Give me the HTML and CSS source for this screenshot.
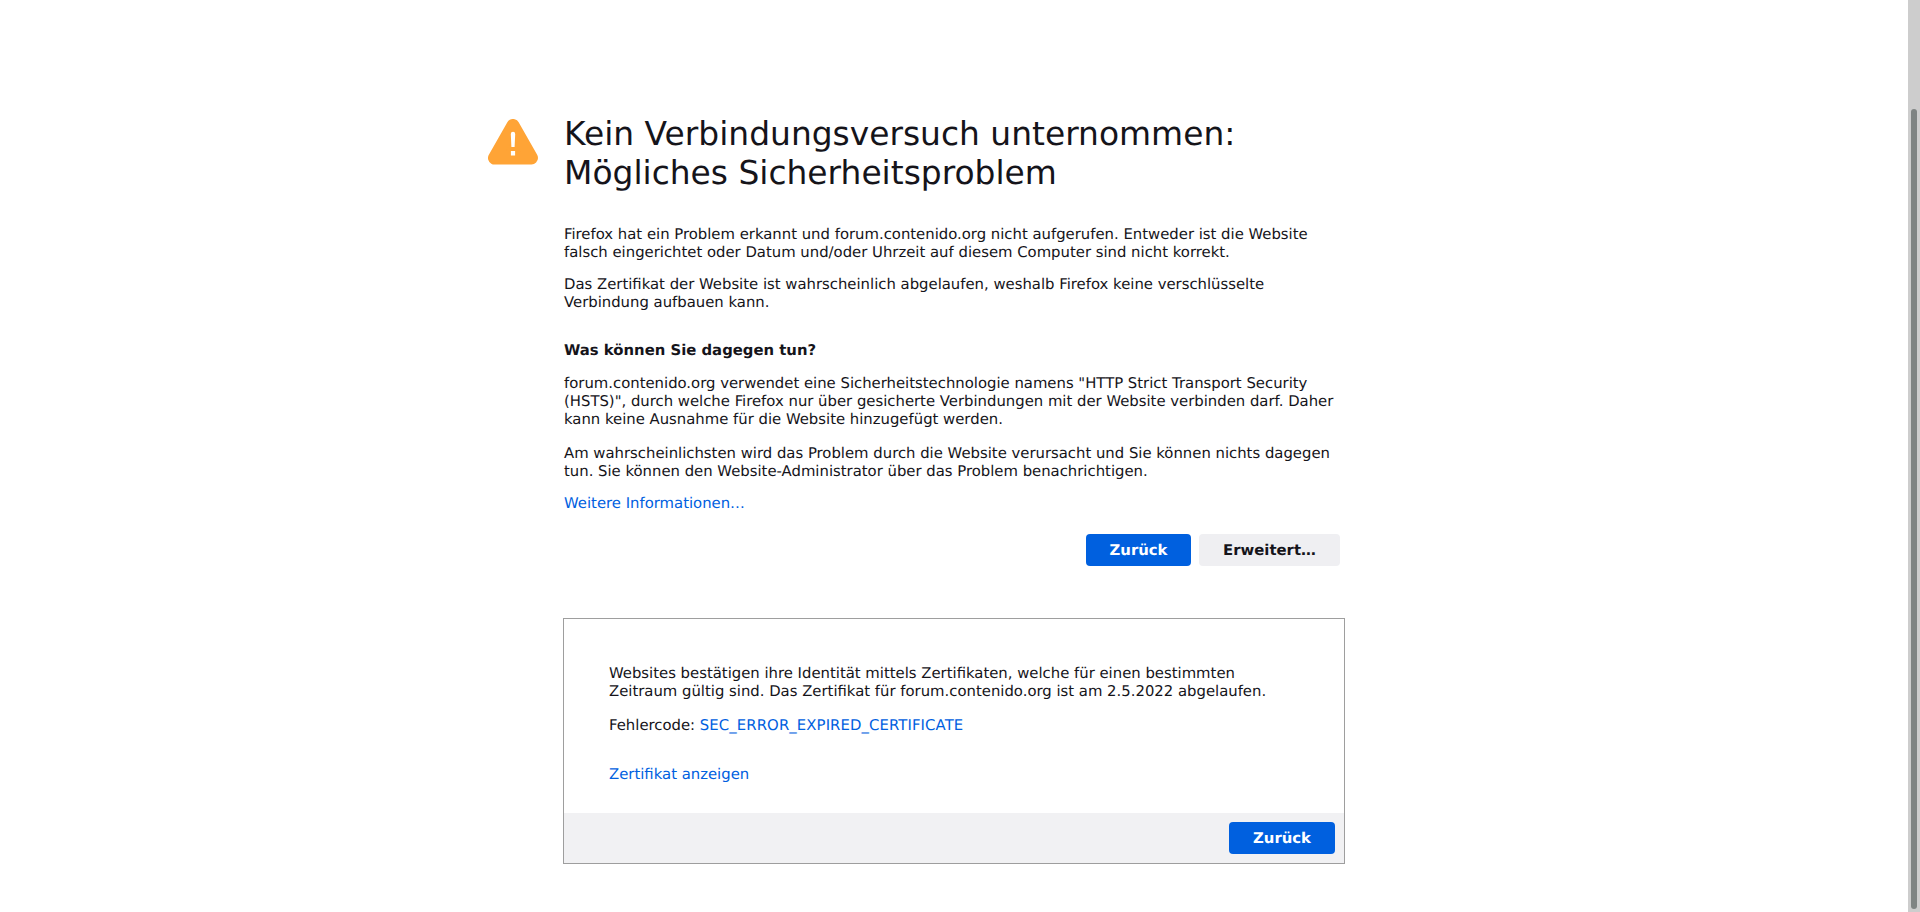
FILE: index.html
```html
<!DOCTYPE html>
<html lang="de">
<head>
  <meta charset="UTF-8" />
  <meta name="viewport" content="width=device-width, initial-scale=1.0"/>
  <title>Fehler: Gesicherte Verbindung fehlgeschlagen</title>
  <link rel="stylesheet" href="styles.css">
</head>
<body>
  <div class="page">
    <main class="container">
      <div class="title">
        <svg class="title-icon" viewBox="0 0 50 46" aria-hidden="true">
          <polygon class="icon-bg" points="25,6.5 6.5,39 43.5,39"/>
          <path class="icon-mark" d="M22.8 15a2.2 2.2 0 0 1 4.4 0l-.6 13h-3.2zM22.9 32h4.2v4.4h-4.2z"/>
        </svg>
        <h1>Kein Verbindungsversuch unternommen: Mögliches Sicherheitsproblem</h1>
      </div>

      <div class="desc">
        <p>Firefox hat ein Problem erkannt und forum.contenido.org nicht aufgerufen. Entweder ist die Website falsch eingerichtet oder Datum und/oder Uhrzeit auf diesem Computer sind nicht korrekt.</p>
        <p>Das Zertifikat der Website ist wahrscheinlich abgelaufen, weshalb Firefox keine verschlüsselte Verbindung aufbauen kann.</p>
      </div>

      <div class="what">
        <h3>Was können Sie dagegen tun?</h3>
        <p>forum.contenido.org verwendet eine Sicherheitstechnologie namens "HTTP Strict Transport Security (HSTS)", durch welche Firefox nur über gesicherte Verbindungen mit der Website verbinden darf. Daher kann keine Ausnahme für die Website hinzugefügt werden.</p>
        <p>Am wahrscheinlichsten wird das Problem durch die Website verursacht und Sie können nichts dagegen tun. Sie können den Website-Administrator über das Problem benachrichtigen.</p>
        <p><a href="#">Weitere Informationen…</a></p>
      </div>

      <div class="actions">
        <button class="btn btn-primary btn-back">Zurück</button>
        <button class="btn btn-advanced">Erweitert…</button>
      </div>

      <section class="advanced">
        <div class="advanced-body">
          <p>Websites bestätigen ihre Identität mittels Zertifikaten, welche für einen bestimmten Zeitraum gültig sind. Das Zertifikat für forum.contenido.org ist am 2.5.2022 abgelaufen.</p>
          <p>Fehlercode: <a class="error-code" href="#">SEC_ERROR_EXPIRED_CERTIFICATE</a></p>
          <p class="cert-link"><a href="#">Zertifikat anzeigen</a></p>
        </div>
        <div class="advanced-foot">
          <button class="btn btn-primary btn-foot">Zurück</button>
        </div>
      </section>
    </main>

    <div class="scrollbar">
      <div class="scrollbar-thumb"></div>
    </div>
  </div>
</body>
</html>
```

FILE: styles.css
```css
html, body {
  height: 100%;
}
body {
  margin: 0;
  background: #ffffff;
  color: #15141a;
  font-family: 'DejaVu Sans', sans-serif;
  font-size: 14.85px;
  line-height: 18px;
  text-rendering: geometricPrecision;
  overflow: hidden;
}
.page {
  display: flex;
  height: 912px;
}
.container {
  flex: 1;
  box-sizing: border-box;
  padding-top: 113px;
  padding-left: 564px;
  padding-right: 564px;
}
.title {
  display: flex;
  align-items: flex-start;
  gap: 26px;
  margin-left: -76px;
  margin-bottom: 33px;
}
.title-icon {
  flex: none;
  width: 50px;
  height: 46px;
  margin-top: 6px;
}
.icon-bg {
  fill: #ffa436;
  stroke: #ffa436;
  stroke-width: 13;
  stroke-linejoin: round;
}
.icon-mark {
  fill: #ffffff;
}
h1 {
  margin: 1px 0 0;
  font-size: 32.9px;
  font-weight: 400;
  line-height: 39px;
}
h3 {
  margin: 0 0 15px;
  font-size: 14.85px;
  font-weight: 700;
  line-height: 18px;
}
p {
  margin: 0 0 14px;
}
a {
  color: #0060df;
  text-decoration: none;
}
.error-code {
  letter-spacing: 0.1px;
}
.what {
  margin-top: 30px;
}
.what p:nth-of-type(1) {
  margin-bottom: 16px;
}
.actions {
  display: flex;
  justify-content: flex-end;
  gap: 8px;
  padding-right: 4px;
  margin-top: 22px;
}
.btn {
  height: 32px;
  border: none;
  border-radius: 4px;
  padding: 0;
  font-family: inherit;
  font-size: 14.85px;
  font-weight: 700;
  text-rendering: geometricPrecision;
}
.btn-primary {
  background: #0060df;
  color: #ffffff;
}
.btn-back {
  width: 105px;
}
.btn-advanced {
  width: 141px;
  background: #efeff2;
  color: #15141a;
}
.advanced {
  margin-top: 52px;
  margin-left: -1px;
  margin-right: -1px;
  border: 1px solid #9e9e9e;
}
.advanced-body {
  padding: 45px 45px 30px;
}
.advanced-body p:first-child {
  margin-bottom: 16px;
}
.cert-link {
  margin: 31px 0 0;
}
.advanced-foot {
  display: flex;
  justify-content: flex-end;
  background: #f1f1f3;
  padding: 9px;
}
.btn-foot {
  width: 106px;
}
.scrollbar {
  flex: none;
  position: relative;
  width: 12px;
  background: #cdcdcd;
}
.scrollbar-thumb {
  position: absolute;
  top: 109px;
  bottom: 3px;
  left: 3px;
  width: 6px;
  border-radius: 3px;
  background: #7f8483;
}
```
